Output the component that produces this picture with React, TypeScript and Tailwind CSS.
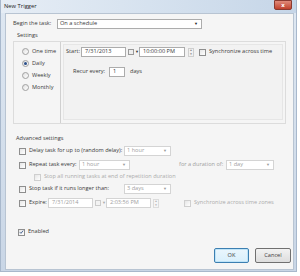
import React from "react";

const font = { fontFamily: '"Open Sans", "Noto Sans", Arial, sans-serif' };

function Check({ checked = false, disabled = false }: { checked?: boolean; disabled?: boolean }) {
  return (
    <div
      className={`w-[7px] h-[7px] border ${disabled ? "border-[#cfcfcf]" : "border-[#8e8e8e]"} bg-gradient-to-br from-[#e6e6e6] to-white flex items-center justify-center shrink-0`}
    >
      {checked && (
        <svg width="6" height="6" viewBox="0 0 6 6">
          <path d="M1 3.2 L2.4 4.6 L5 1.3" stroke="#3a5a8a" strokeWidth="1.1" fill="none" />
        </svg>
      )}
    </div>
  );
}

function Radio({ checked = false }: { checked?: boolean }) {
  return (
    <div className="w-[7px] h-[7px] rounded-full border border-[#a0a0a0] bg-gradient-to-br from-[#e0e0e0] to-white flex items-center justify-center shrink-0">
      {checked && <div className="w-[3px] h-[3px] rounded-full bg-[#2a4f8a]" />}
    </div>
  );
}

function Select({ text, w, disabled = false }: { text: string; w: string; disabled?: boolean }) {
  return (
    <div
      className={`${w} h-[10px] border ${disabled ? "border-[#d4d4d4] text-[#a0a0a0]" : "border-[#acacac] text-[#3a3a3a]"} bg-white flex items-center justify-between pl-[2px] pr-[3px] shrink-0`}
    >
      <span>{text}</span>
      <span className={`text-[4px] ${disabled ? "text-[#999]" : "text-[#222]"}`}>▼</span>
    </div>
  );
}

function Field({ text, w, disabled = false }: { text: string; w: string; disabled?: boolean }) {
  return (
    <div
      className={`${w} h-[10px] border ${disabled ? "border-[#d4d4d4] text-[#a0a0a0]" : "border-[#acacac] text-[#3a3a3a]"} bg-white flex items-center pl-[3px] shrink-0`}
    >
      {text}
    </div>
  );
}

function CalBtn({ disabled = false }: { disabled?: boolean }) {
  return (
    <div className="w-[11px] h-[10px] flex items-center gap-[1px] shrink-0">
      <div className={`w-[6px] h-[6px] border ${disabled ? "border-[#ccc] bg-[#f3f3f3]" : "border-[#999] bg-[#eee]"}`} />
      <span className={`text-[4px] ${disabled ? "text-[#aaa]" : "text-[#333]"}`}>▼</span>
    </div>
  );
}

function Spin({ disabled = false }: { disabled?: boolean }) {
  return (
    <div className={`w-[6px] h-[9px] border ${disabled ? "border-[#dcdcdc]" : "border-[#cfcfcf]"} flex flex-col items-center justify-center text-[3px] leading-[4px] ${disabled ? "text-[#b0b0b0]" : "text-[#888]"} shrink-0`}>
      <span>▲</span>
      <span>▼</span>
    </div>
  );
}

export default function App() {
  return (
    <div className="w-[300px] h-[276px] bg-white text-[5.6px] leading-none text-[#3a3a3a] whitespace-nowrap" style={font}>
      <div className="w-[297px] h-[272px] flex flex-col bg-gradient-to-b from-[#dfe8f2] to-[#c9d6e6] border-l border-r border-b border-[#a8b8cc]">
        {/* title bar */}
        <div className="h-[13px] flex items-center justify-between pl-[3px] pr-[4px] bg-gradient-to-r from-[#e6edf5] via-[#d6e2ef] to-[#c6d6e8]">
          <span className="text-[5.8px] text-[#1e1e1e]">New Trigger</span>
          <div className="w-[18px] h-[10px] -mt-[3px] rounded-b-[2px] bg-gradient-to-b from-[#e08a7a] to-[#c0412c] border border-[#8a3a30] flex items-center justify-center text-white text-[6px] font-bold">
            x
          </div>
        </div>
        {/* client */}
        <div className="flex-1 ml-[4px] mr-[2px] mb-[1px] bg-[#f5f5f5] border border-[#b8c4d2] flex flex-col">
          {/* begin the task */}
          <div className="flex items-center mt-[4px] pl-[7px] h-[11px]">
            <span className="w-[44px]">Begin the task:</span>
            <Select text="On a schedule" w="w-[145px]" />
          </div>
          <div className="pl-[11px] mt-[4px] h-[7px]">Settings</div>
          {/* group */}
          <div className="mx-[7px] mt-[1px] h-[83px] border border-[#dcdcdc] flex">
            <div className="w-[47px] border-r border-[#d0d0d0] flex flex-col pl-[8px] pt-[6px] gap-[5px]">
              <div className="flex items-center gap-[3px] h-[7px]"><Radio /><span>One time</span></div>
              <div className="flex items-center gap-[3px] h-[7px]"><Radio checked /><span>Daily</span></div>
              <div className="flex items-center gap-[3px] h-[7px]"><Radio /><span>Weekly</span></div>
              <div className="flex items-center gap-[3px] h-[7px]"><Radio /><span>Monthly</span></div>
            </div>
            <div className="flex-1 m-[2px] mb-[3px] border border-[#e6e6e6] bg-[#f2f2f2] flex flex-col pl-[2px]">
              <div className="flex items-center mt-[2px] h-[10px]">
                <span className="w-[15px]">Start:</span>
                <Field text="7/31/2013" w="w-[45px]" />
                <div className="ml-[2px]"><CalBtn /></div>
                <Field text="10:00:00 PM" w="w-[46px]" />
                <div className="ml-[3px]"><Spin /></div>
                <div className="ml-[5px] flex items-center gap-[3px]"><Check /><span>Synchronize across time</span></div>
              </div>
              <div className="flex items-center mt-[10px] h-[10px] pl-[7px]">
                <span className="w-[36px]">Recur every:</span>
                <Field text="1" w="w-[16px]" />
                <span className="ml-[5px]">days</span>
              </div>
            </div>
          </div>
          <div className="pl-[10px] mt-[12px] h-[7px]">Advanced settings</div>
          {/* advanced rows */}
          <div className="flex items-center pl-[13px] mt-[3px] h-[10px]">
            <Check />
            <span className="ml-[3px] w-[95px]">Delay task for up to (random delay):</span>
            <Select text="1 hour" w="w-[47px]" disabled />
          </div>
          <div className="flex items-center pl-[13px] mt-[4px] h-[10px]">
            <Check />
            <span className="ml-[3px] w-[50px]">Repeat task every:</span>
            <Select text="1 hour" w="w-[51px]" disabled />
            <span className="ml-[49px] w-[47px] text-[#a0a0a0]">for a duration of:</span>
            <Select text="1 day" w="w-[48px]" disabled />
          </div>
          <div className="flex items-center pl-[28px] mt-[3px] h-[8px] text-[#ababab]">
            <Check disabled />
            <span className="ml-[3px]">Stop all running tasks at end of repetition duration</span>
          </div>
          <div className="flex items-center pl-[13px] mt-[3px] h-[10px]">
            <Check />
            <span className="ml-[3px] w-[95px]">Stop task if it runs longer than:</span>
            <Select text="3 days" w="w-[47px]" disabled />
          </div>
          <div className="flex items-center pl-[13px] mt-[4px] h-[10px]">
            <Check />
            <span className="ml-[3px] w-[19px]">Expire:</span>
            <Field text="7/31/2014" w="w-[45px]" disabled />
            <div className="ml-[2px]"><CalBtn disabled /></div>
            <Field text="2:03:56 PM" w="w-[45px]" disabled />
            <div className="ml-[2px]"><Spin disabled /></div>
            <div className="ml-[25px] flex items-center gap-[3px] text-[#ababab]"><Check disabled /><span>Synchronize across time zones</span></div>
          </div>
          <div className="flex items-center pl-[12px] mt-[20px] h-[8px]">
            <Check checked />
            <span className="ml-[3px]">Enabled</span>
          </div>
          <div className="flex justify-end gap-[6px] pr-[2px] mt-[12px]">
            <div className="w-[35px] h-[15px] rounded-[2px] border border-[#3c7fb1] bg-gradient-to-b from-[#eaf6fd] to-[#d9f0fc] flex items-center justify-center shadow-[inset_0_0_0_1px_#bfe4f8]">OK</div>
            <div className="w-[36px] h-[15px] rounded-[2px] border border-[#707070] bg-gradient-to-b from-[#f2f2f2] to-[#dddddd] flex items-center justify-center">Cancel</div>
          </div>
        </div>
      </div>
    </div>
  );
}
